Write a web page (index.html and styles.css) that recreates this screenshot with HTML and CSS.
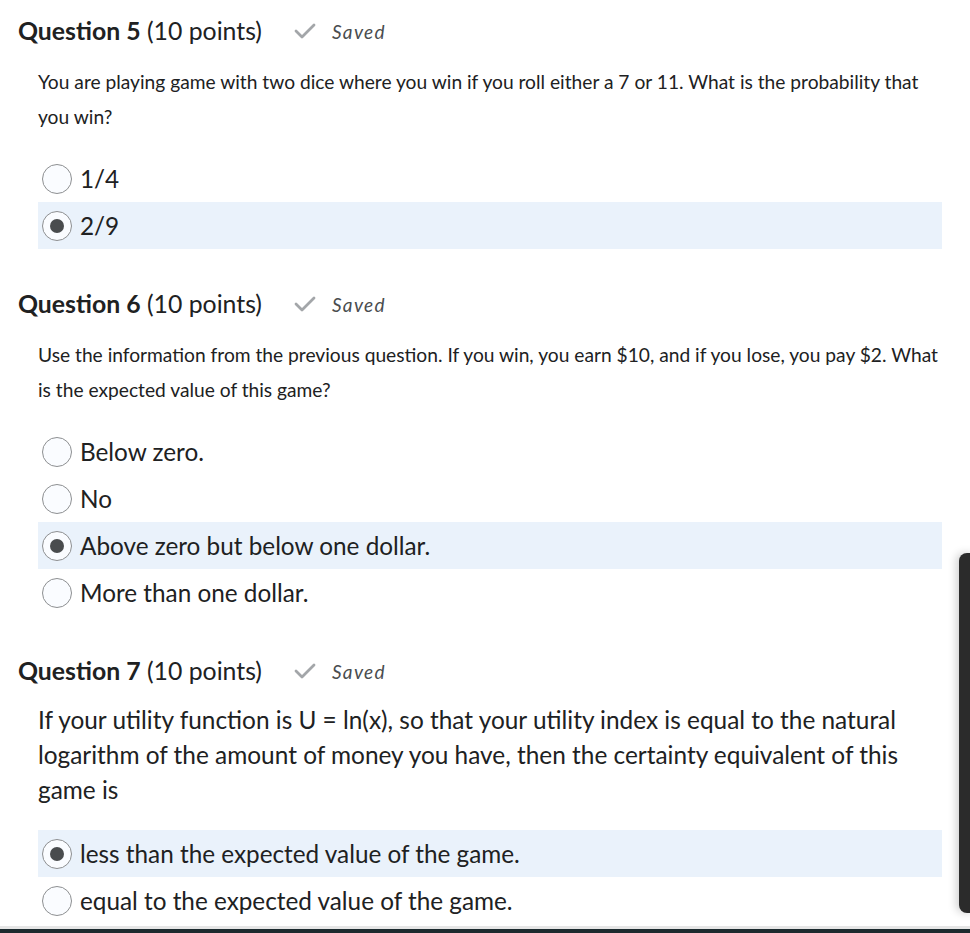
FILE: index.html
```html
<!DOCTYPE html>
<html lang="en">
<head>
<meta charset="utf-8">
<title>Quiz</title>
<link rel="stylesheet" href="styles.css">
</head>
<body>
<main class="quiz">
  <section class="question">
    <div class="q-head">
      <h2 class="q-title"><strong>Question 5</strong> (10 points)</h2>
      <span class="saved">
        <svg class="check" width="24" height="16" viewBox="0 0 24 16"><polyline points="3,8 9,14 21,2" fill="none" stroke="#a3a6a9" stroke-width="2.8" stroke-linecap="round" stroke-linejoin="round"/></svg>
        <em>Saved</em>
      </span>
    </div>
    <p class="q-text">You are playing game with two dice where you win if you roll either a 7 or 11. What is the probability that you win?</p>
    <div class="options">
      <label class="opt"><span class="radio"></span><span class="opt-text">1/4</span></label>
      <label class="opt selected"><span class="radio on"></span><span class="opt-text">2/9</span></label>
    </div>
  </section>

  <section class="question">
    <div class="q-head">
      <h2 class="q-title"><strong>Question 6</strong> (10 points)</h2>
      <span class="saved">
        <svg class="check" width="24" height="16" viewBox="0 0 24 16"><polyline points="3,8 9,14 21,2" fill="none" stroke="#a3a6a9" stroke-width="2.8" stroke-linecap="round" stroke-linejoin="round"/></svg>
        <em>Saved</em>
      </span>
    </div>
    <p class="q-text">Use the information from the previous question. If you win, you earn $10, and if you lose, you pay $2. What is the expected value of this game?</p>
    <div class="options">
      <label class="opt"><span class="radio"></span><span class="opt-text">Below zero.</span></label>
      <label class="opt"><span class="radio"></span><span class="opt-text">No</span></label>
      <label class="opt selected"><span class="radio on"></span><span class="opt-text">Above zero but below one dollar.</span></label>
      <label class="opt"><span class="radio"></span><span class="opt-text">More than one dollar.</span></label>
    </div>
  </section>

  <section class="question">
    <div class="q-head">
      <h2 class="q-title"><strong>Question 7</strong> (10 points)</h2>
      <span class="saved">
        <svg class="check" width="24" height="16" viewBox="0 0 24 16"><polyline points="3,8 9,14 21,2" fill="none" stroke="#a3a6a9" stroke-width="2.8" stroke-linecap="round" stroke-linejoin="round"/></svg>
        <em>Saved</em>
      </span>
    </div>
    <p class="q-text large">If your utility function is U = ln(x), so that your utility index is equal to the natural logarithm of the amount of money you have, then the certainty equivalent of this game is</p>
    <div class="options spaced">
      <label class="opt selected"><span class="radio on"></span><span class="opt-text">less than the expected value of the game.</span></label>
      <label class="opt"><span class="radio"></span><span class="opt-text">equal to the expected value of the game.</span></label>
    </div>
  </section>
</main>
<div class="scroll-panel"></div>
<div class="bottom-bar"></div>
</body>
</html>
```
FILE: styles.css
```css
html, body {
  margin: 0;
  padding: 0;
  background: #ffffff;
}
body {
  font-family: Lato, "Open Sans", sans-serif;
  color: #202122;
  overflow: hidden;
  height: 933px;
}
.quiz {
  padding: 11px 0 0 18px;
  width: 924px;
}
.question + .question {
  margin-top: 35px;
}
.q-head {
  display: flex;
  align-items: center;
  height: 40px;
}
.q-title {
  margin: 0;
  font-size: 24.8px;
  font-weight: 400;
  line-height: 40px;
  color: #202122;
}
.q-title strong {
  font-weight: 700;
}
.saved {
  display: flex;
  align-items: center;
  margin-left: 31px;
  font-size: 19px;
  letter-spacing: 1.3px;
  color: #494c4e;
}
.check {
  margin-right: 15px;
}
.saved em {
  font-style: italic;
}
.q-text {
  margin: 13px 0 0 20px;
  width: 904px;
  font-size: 19.2px;
  line-height: 35px;
}
.q-text.large {
  font-size: 24.4px;
  margin-top: 11px;
}
.options {
  margin: 21px 0 0 20px;
  width: 904px;
}
.options.spaced {
  margin-top: 23px;
}
.opt {
  display: flex;
  align-items: center;
  height: 47px;
  padding-left: 4px;
}
.opt.selected {
  background: #eaf2fb;
}
.radio {
  box-sizing: border-box;
  width: 30px;
  height: 30px;
  border-radius: 50%;
  border: 1px solid #8d8f91;
  background: #fafcff;
  display: flex;
  align-items: center;
  justify-content: center;
  flex: none;
}
.radio.on::after {
  content: "";
  width: 14px;
  height: 14px;
  border-radius: 50%;
  background: #494c4e;
}
.opt-text {
  margin-left: 8px;
  font-size: 24.3px;
  line-height: 30px;
  color: #202122;
}
.scroll-panel {
  position: fixed;
  left: 959px;
  top: 553px;
  width: 20px;
  height: 360px;
  background: #2b2b2b;
  border-radius: 8px;
  box-shadow: -3px 0 8px rgba(0,0,0,0.18);
}
.bottom-bar {
  position: fixed;
  left: 0;
  right: 0;
  bottom: 0;
  height: 4px;
  background: #1c2a2e;
  border-top: 3px solid #e6e6e6;
}
```
